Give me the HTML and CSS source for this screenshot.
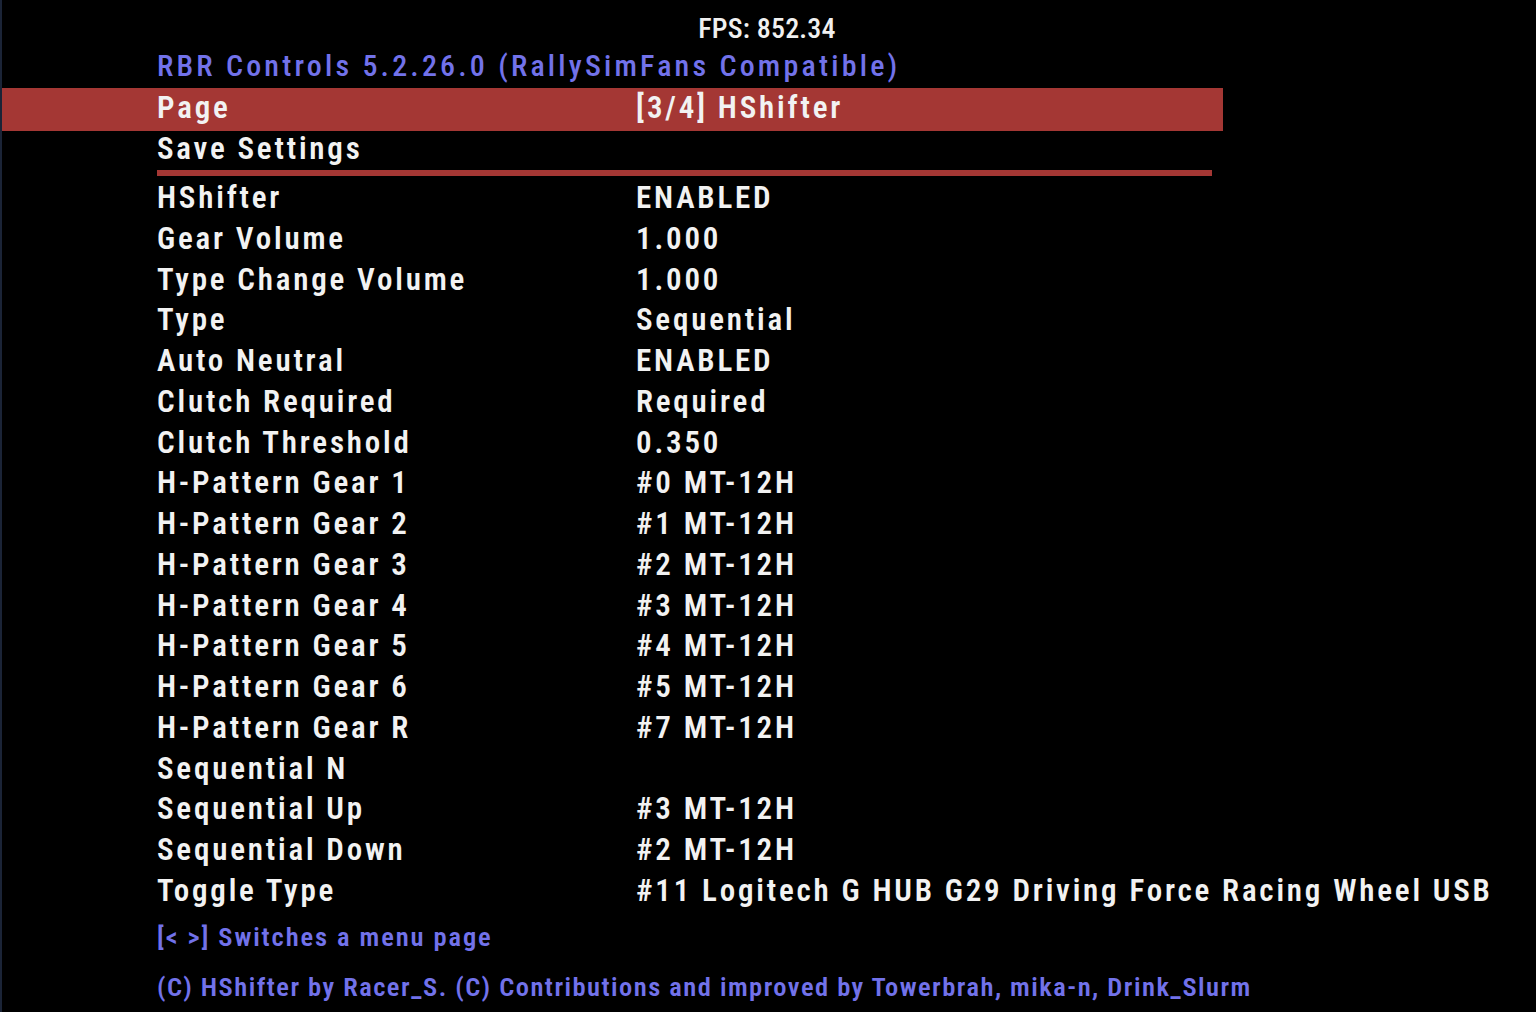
FILE: index.html
```html
<!DOCTYPE html>
<html>
<head>
<meta charset="utf-8">
<title>RBR Controls</title>
<link rel="stylesheet" href="styles.css">
</head>
<body>
<div class="screen">
  <div class="fps">FPS: 852.34</div>
  <div class="title">RBR Controls 5.2.26.0 (RallySimFans Compatible)</div>
  <div class="bar">
    <div class="row row-page"><span class="label">Page</span><span class="value">[3/4] HShifter</span></div>
  </div>
  <div class="row row-save"><span class="label">Save Settings</span><span class="value"></span></div>
  <div class="divider"></div>
  <div class="list">
    <div class="row"><span class="label">HShifter</span><span class="value">ENABLED</span></div>
    <div class="row"><span class="label">Gear Volume</span><span class="value">1.000</span></div>
    <div class="row"><span class="label">Type Change Volume</span><span class="value">1.000</span></div>
    <div class="row"><span class="label">Type</span><span class="value">Sequential</span></div>
    <div class="row"><span class="label">Auto Neutral</span><span class="value">ENABLED</span></div>
    <div class="row"><span class="label">Clutch Required</span><span class="value">Required</span></div>
    <div class="row"><span class="label">Clutch Threshold</span><span class="value">0.350</span></div>
    <div class="row"><span class="label">H-Pattern Gear 1</span><span class="value">#0 MT-12H</span></div>
    <div class="row"><span class="label">H-Pattern Gear 2</span><span class="value">#1 MT-12H</span></div>
    <div class="row"><span class="label">H-Pattern Gear 3</span><span class="value">#2 MT-12H</span></div>
    <div class="row"><span class="label">H-Pattern Gear 4</span><span class="value">#3 MT-12H</span></div>
    <div class="row"><span class="label">H-Pattern Gear 5</span><span class="value">#4 MT-12H</span></div>
    <div class="row"><span class="label">H-Pattern Gear 6</span><span class="value">#5 MT-12H</span></div>
    <div class="row"><span class="label">H-Pattern Gear R</span><span class="value">#7 MT-12H</span></div>
    <div class="row"><span class="label">Sequential N</span><span class="value"></span></div>
    <div class="row"><span class="label">Sequential Up</span><span class="value">#3 MT-12H</span></div>
    <div class="row"><span class="label">Sequential Down</span><span class="value">#2 MT-12H</span></div>
    <div class="row"><span class="label">Toggle Type</span><span class="value">#11 Logitech G HUB G29 Driving Force Racing Wheel USB</span></div>
  </div>
  <div class="hint">[&lt; &gt;] Switches a menu page</div>
  <div class="credits">(C) HShifter by Racer_S. (C) Contributions and improved by Towerbrah, mika-n, Drink_Slurm</div>
</div>
</body>
</html>
```
FILE: styles.css
```css
html, body {
  margin: 0;
  padding: 0;
  background: #000;
}

.screen {
  width: 1534px;
  height: 1012px;
  border-left: 2px solid #1b2437;
  background: #000;
  color: #f2f2f2;
  font-family: "Roboto Condensed", "Open Sans", sans-serif;
  overflow: hidden;
  padding-top: 13px;
  box-sizing: border-box;
}

.fps {
  font-size: 28px;
  font-weight: 500;
  line-height: 32px;
  letter-spacing: 0.2px;
  text-align: center;
  color: #f0f0f0;
  padding-right: 2px;
}

.title {
  font-size: 30px;
  font-weight: 500;
  line-height: 42px;
  padding-bottom: 1px;
  padding-left: 155px;
  letter-spacing: 3.2px;
  color: #7272ea;
  white-space: nowrap;
}

.row {
  display: grid;
  grid-template-columns: 479px auto;
  padding-left: 155px;
  font-size: 31px;
  font-weight: 600;
  letter-spacing: 2.8px;
  line-height: 40.76px;
  white-space: nowrap;
}

.bar {
  width: 1221px;
  height: 43px;
  background: #a43734;
}

.row-page {
  line-height: 39px;
}

.row-save {
  line-height: 36px;
}

.divider {
  margin-top: 3px;
  margin-left: 155px;
  width: 1055px;
  height: 6px;
  background: #a43734;
}

.list {
  padding-top: 2px;
}

.hint {
  padding-left: 155px;
  font-size: 26.5px;
  font-weight: 600;
  line-height: 49px;
  letter-spacing: 1.9px;
  color: #7272ea;
  white-space: nowrap;
}

.credits {
  padding-left: 155px;
  font-size: 26.5px;
  font-weight: 600;
  line-height: 51px;
  letter-spacing: 1.47px;
  color: #7272ea;
  white-space: nowrap;
}
```
